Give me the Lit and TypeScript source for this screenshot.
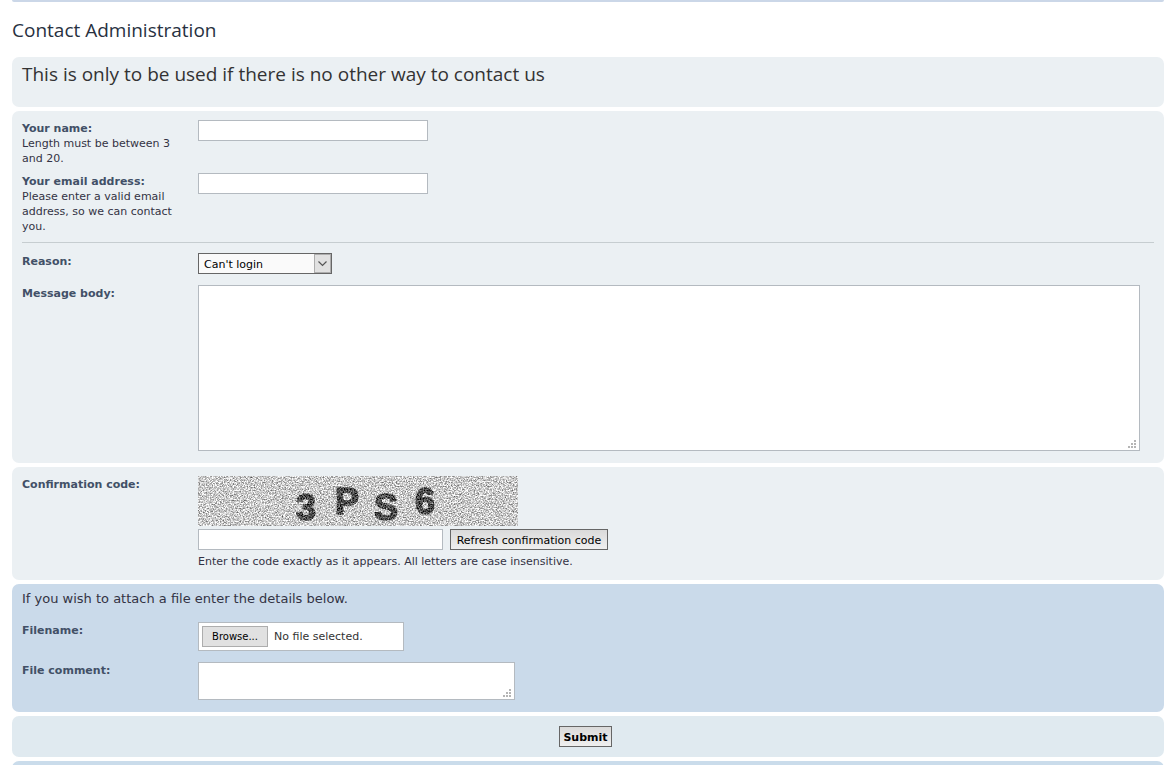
import { LitElement, html, css, svg } from "lit";
import { customElement } from "lit/decorators.js";

const captcha = [
  { ch: "3", x: 98, y: 44 },
  { ch: "P", x: 137, y: 38 },
  { ch: "S", x: 176, y: 44 },
  { ch: "6", x: 217, y: 38 },
];

@customElement("app-root")
export class AppRoot extends LitElement {
  static styles = css`
    :host {
      display: block;
      height: 100vh;
      overflow: hidden;
      background: #fff;
      color: #333344;
      font: 11px/15px "DejaVu Sans", Verdana, sans-serif;
    }
    * {
      box-sizing: border-box;
    }
    .page {
      display: flex;
      flex-direction: column;
      gap: 4px;
      padding: 0 11px 0 12px;
    }
    .bar {
      background: #cadceb;
      height: 20px;
      border-radius: 7px 7px 0 0;
    }
    .bar.top {
      height: 2px;
      border-radius: 0 0 7px 7px;
      background: #cbd7e8;
    }
    h2,
    h3 {
      margin: 0;
      font: 500 19px/26px "Open Sans", "Trebuchet MS", sans-serif;
    }
    h2 {
      padding: 11px 0 10px;
      color: #28313f;
    }
    h3 {
      color: #333;
    }
    .panel {
      background: #ebf0f3;
      border-radius: 7px;
      padding: 9px 10px 12px;
    }
    .panel.intro {
      padding: 4px 10px 20px;
    }
    .panel.confirm {
      padding-bottom: 11px;
    }
    .panel.attach {
      background: #cadaea;
      padding-top: 6px;
    }
    .panel.actions {
      background: #e0eaf0;
      padding: 10px 15px 10px 10px;
      display: flex;
      justify-content: center;
    }
    .row {
      display: grid;
      grid-template-columns: 176px 1fr;
      align-items: start;
    }
    .group {
      display: flex;
      flex-direction: column;
      gap: 7px;
    }
    .group.loose {
      gap: 11px;
    }
    .term {
      padding: 1px 16px 0 0;
    }
    .term label {
      display: block;
      font-weight: 700;
      color: #425067;
    }
    hr {
      border: 0;
      border-top: 1px solid #c6cdd0;
      margin: 8px 0 10px;
    }
    input,
    textarea,
    select,
    button {
      font: inherit;
      margin: 0;
    }
    .text,
    textarea {
      display: block;
      border: 1px solid #b4bac0;
      border-radius: 0;
      background: #fff;
      color: #333;
      padding: 2px;
      outline: none;
    }
    .text {
      width: 230px;
      height: 21px;
    }
    .text.code {
      width: 245px;
    }
    textarea {
      resize: both;
    }
    textarea::-webkit-resizer {
      background:
        linear-gradient(#b5b5b5, #b5b5b5) 10px 5px / 2px 2px no-repeat,
        linear-gradient(#b5b5b5, #b5b5b5) 7px 8px / 2px 2px no-repeat,
        linear-gradient(#b5b5b5, #b5b5b5) 10px 8px / 2px 2px no-repeat,
        linear-gradient(#b5b5b5, #b5b5b5) 4px 11px / 2px 2px no-repeat,
        linear-gradient(#b5b5b5, #b5b5b5) 7px 11px / 2px 2px no-repeat,
        linear-gradient(#b5b5b5, #b5b5b5) 10px 11px / 2px 2px no-repeat;
    }
    .message {
      width: calc(100% - 14px);
      height: 166px;
    }
    .comment {
      width: 317px;
      height: 38px;
    }
    .select {
      display: grid;
      width: 134px;
    }
    .select > * {
      grid-area: 1 / 1;
    }
    select {
      appearance: none;
      height: 21px;
      border: 1px solid #666;
      border-radius: 0;
      background: #fafafa;
      color: #000;
      padding: 1px 22px 0 5px;
    }
    .arrow {
      justify-self: end;
      align-self: center;
      margin-right: 1px;
      pointer-events: none;
      z-index: 1;
    }
    .captcha {
      display: block;
      margin-bottom: 3px;
      overflow: visible;
    }
    .captcha text {
      font: 700 36px "Liberation Sans", sans-serif;
    }
    .line {
      display: flex;
      gap: 7px;
      margin-bottom: 4px;
    }
    button {
      height: 21px;
      border: 1px solid #666;
      border-radius: 0;
      background: linear-gradient(#dadada, #efefef);
      color: #000;
      padding: 1px 3px 0;
      white-space: nowrap;
    }
    .refresh {
      min-width: 158px;
    }
    .submit {
      font-weight: 700;
    }
    .lead {
      margin: 0 0 14px;
      font-size: 13px;
      line-height: 18px;
    }
    .file {
      position: relative;
      display: flex;
      align-items: center;
      gap: 6px;
      width: 206px;
      height: 29px;
      padding: 0 3px;
      background: #fff;
      border: 1px solid #b4bac0;
      color: #333;
    }
    .browse {
      width: 66px;
      height: 21px;
      line-height: 19px;
      text-align: center;
      border: 1px solid #adadad;
      background: #e1e1e1;
      color: #000;
      font-size: 10px;
    }
    .file input {
      position: absolute;
      inset: 0;
      width: 100%;
      opacity: 0;
    }
  `;

  render() {
    return html`
      <form class="page" @submit=${(e: Event) => e.preventDefault()}>
        <div class="bar top"></div>
        <h2>Contact Administration</h2>
        <section class="panel intro">
          <h3>This is only to be used if there is no other way to contact us</h3>
        </section>

        <section class="panel">
          <div class="group">
            <div class="row">
              <div class="term">
                <label for="name">Your name:</label>
                <span>Length must be between 3 and 20.</span>
              </div>
              <input class="text" id="name" type="text" />
            </div>
            <div class="row">
              <div class="term">
                <label for="email">Your email address:</label>
                <span>Please enter a valid email address, so we can contact you.</span>
              </div>
              <input class="text" id="email" type="email" />
            </div>
          </div>
          <hr />
          <div class="group loose">
            <div class="row">
              <div class="term"><label for="reason">Reason:</label></div>
              <div class="select">
                <select id="reason">
                  <option>Can't login</option>
                </select>
                <svg class="arrow" width="17" height="19" viewBox="0 0 17 19" aria-hidden="true">
                  <rect x=".5" y=".5" width="16" height="18" fill="#e1e1e1" stroke="#adadad" />
                  <path d="M4.5 7.5l4 4 4-4" fill="none" stroke="#555" stroke-width="1.2" />
                </svg>
              </div>
            </div>
            <div class="row">
              <div class="term"><label for="message">Message body:</label></div>
              <textarea class="message" id="message"></textarea>
            </div>
          </div>
        </section>

        <section class="panel confirm">
          <div class="row">
            <div class="term"><label for="code">Confirmation code:</label></div>
            <div>
              <svg class="captcha" width="320" height="50" viewBox="0 0 320 50">
                <defs>
                  <filter id="grain" filterUnits="userSpaceOnUse" x="0" y="0" width="320" height="50" color-interpolation-filters="sRGB">
                    <feTurbulence type="fractalNoise" baseFrequency="0.71 0.77" numOctaves="3" seed="7" />
                    <feColorMatrix values="1.2 0 0 0 -0.1  1.2 0 0 0 -0.1  1.2 0 0 0 -0.1  0 0 0 0 1" result="n" />
                    <feComposite in="SourceGraphic" in2="n" operator="arithmetic" k2="1" k3="1" k4="-0.5" />
                  </filter>
                </defs>
                <g filter="url(#grain)">
                  <rect width="320" height="50" fill="#cacaca" />
                  ${captcha.map(
                    (c) =>
                      svg`<text x=${c.x} y=${c.y} fill="#4c4c4c" stroke="#4c4c4c" stroke-width="1.5">${c.ch}</text>`
                  )}
                </g>
              </svg>
              <div class="line">
                <input class="text code" id="code" type="text" />
                <button class="refresh" type="button">Refresh confirmation code</button>
              </div>
              <span>Enter the code exactly as it appears. All letters are case insensitive.</span>
            </div>
          </div>
        </section>

        <section class="panel attach">
          <p class="lead">If you wish to attach a file enter the details below.</p>
          <div class="group loose">
            <div class="row">
              <div class="term"><label for="file">Filename:</label></div>
              <div class="file">
                <span class="browse">Browse...</span>
                <span>No file selected.</span>
                <input id="file" type="file" />
              </div>
            </div>
            <div class="row">
              <div class="term"><label for="comment">File comment:</label></div>
              <textarea class="comment" id="comment"></textarea>
            </div>
          </div>
        </section>

        <section class="panel actions">
          <button class="submit" type="submit">Submit</button>
        </section>
        <div class="bar"></div>
      </form>
    `;
  }
}
